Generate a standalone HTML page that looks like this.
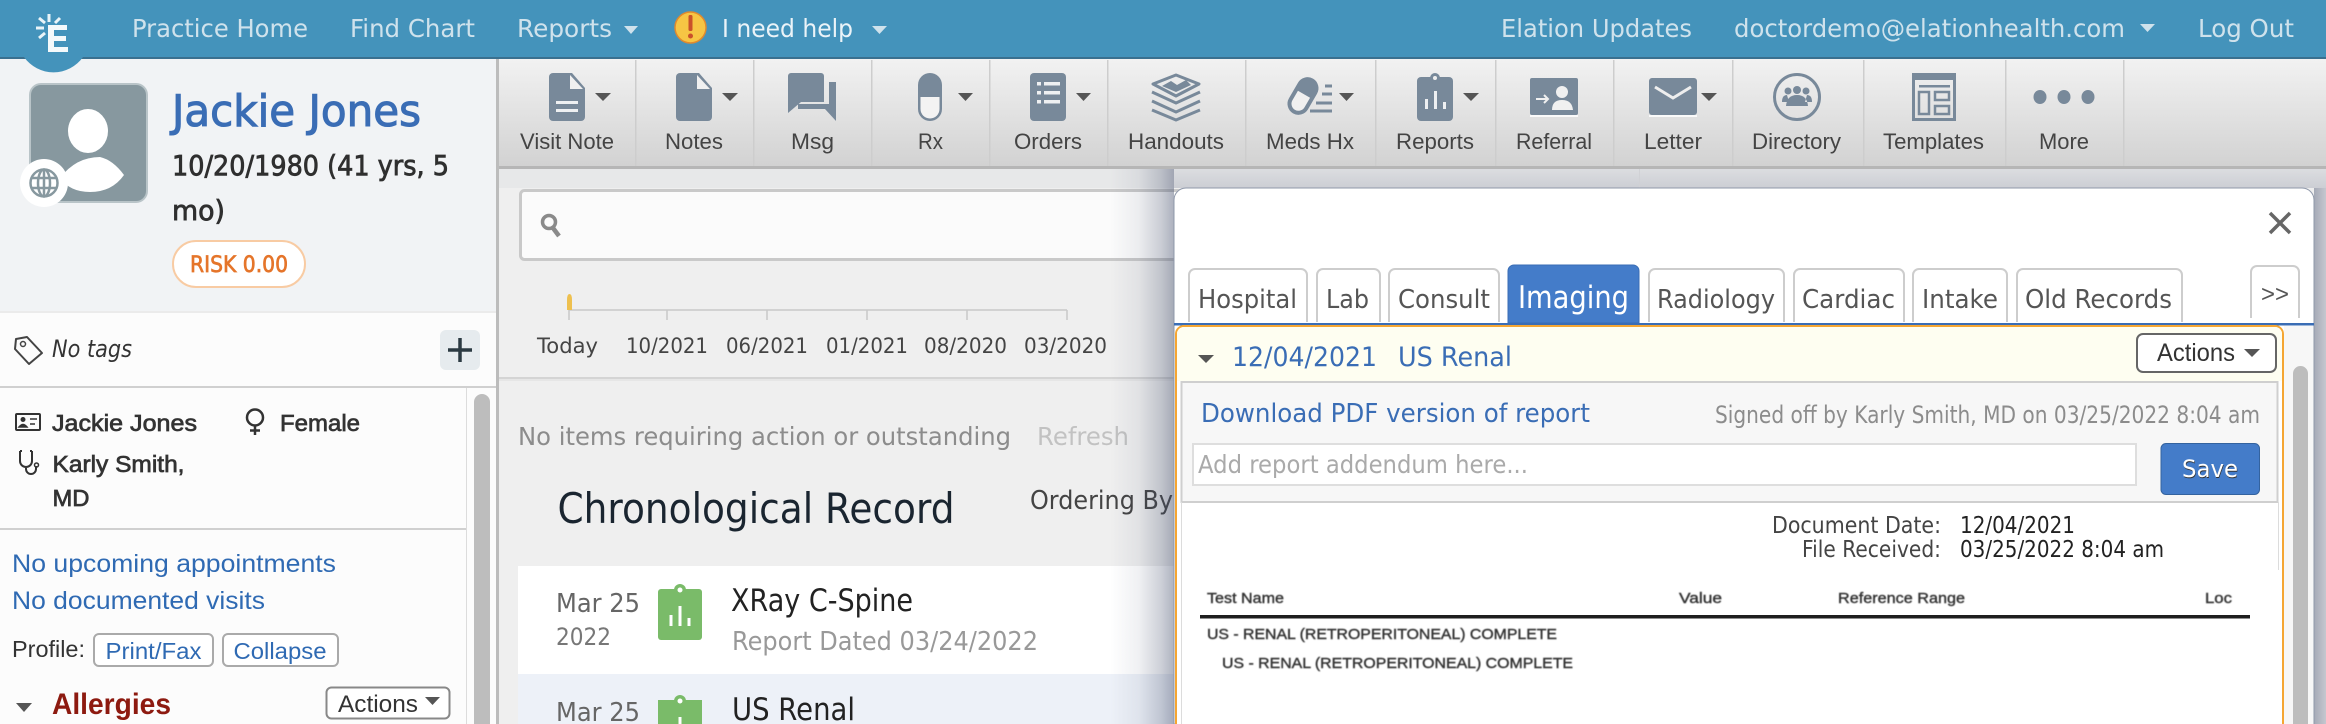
<!DOCTYPE html>
<html><head><meta charset="utf-8"><title>Elation</title>
<style>
html,body{margin:0;padding:0;background:#efefef;width:2326px;height:724px;overflow:hidden}
svg{display:block}
.o{font-family:"DejaVu Sans","Liberation Sans",sans-serif}
.h{font-family:"Liberation Sans",sans-serif}
.n{font-size:25px;fill:#cfe2ec}
.t{font-size:22px;fill:#444}
.tb{font-size:26px;fill:#555}
.ic{fill:#78899a}
.car{fill:#555}
.ln{stroke:#78899a;fill:none}
.pdf{font-size:15px;fill:#333;stroke:#333;stroke-width:.4px;filter:url(#soft)}
</style></head><body>
<svg xmlns="http://www.w3.org/2000/svg" width="2326" height="724" viewBox="0 0 2326 724">
<defs>
<linearGradient id="tg" x1="0" y1="0" x2="0" y2="1"><stop offset="0" stop-color="#f2f2f2"/><stop offset="1" stop-color="#d2d2d2"/></linearGradient>
<linearGradient id="shl" x1="0" y1="0" x2="1" y2="0"><stop offset="0" stop-color="#3f4a68" stop-opacity="0"/><stop offset=".45" stop-color="#3f4a68" stop-opacity=".08"/><stop offset=".8" stop-color="#3f4a68" stop-opacity=".26"/><stop offset="1" stop-color="#3f4a68" stop-opacity=".42"/></linearGradient>
<linearGradient id="shr" x1="0" y1="0" x2="1" y2="0"><stop offset="0" stop-color="#3f4a68" stop-opacity=".42"/><stop offset="1" stop-color="#3f4a68" stop-opacity=".24"/></linearGradient>
<linearGradient id="sht" x1="0" y1="0" x2="0" y2="1"><stop offset="0" stop-color="#3f4a68" stop-opacity=".11"/><stop offset="1" stop-color="#3f4a68" stop-opacity=".2"/></linearGradient>
<filter id="soft" x="-5%" y="-30%" width="110%" height="160%"><feGaussianBlur stdDeviation=".45"/></filter>
</defs>

<!-- main background -->
<rect width="2326" height="724" fill="#efefef"/>

<!-- search + timeline -->
<rect x="520.5" y="190.5" width="1400" height="69" rx="4" fill="#fbfbfb" stroke="#c9c9c9" stroke-width="3"/>
<g fill="none" stroke="#8a8a8a">
<circle cx="549" cy="222" r="6.5" stroke-width="3.5"/><path d="M553 228l6 8" stroke-width="4.5"/>
</g>
<rect x="499" y="377" width="700" height="2" fill="#d4d4d4"/>
<rect x="499" y="379" width="700" height="2" fill="#e6e6e6"/>
<path d="M569 310H1067M569 310v10M667 310v10M767 310v10M867 310v10M967 310v10M1067 310v10" stroke="#c9c9c9" stroke-width="1.5" fill="none"/>
<path d="M567 310V300q0-6 2.500-6t2.500 6V310z" fill="#eec04f"/>
<g class="o" font-size="21" fill="#444">
<text x="537" y="353" textLength="61" lengthAdjust="spacingAndGlyphs">Today</text>
<text x="626" y="353" textLength="82" lengthAdjust="spacingAndGlyphs">10/2021</text>
<text x="726" y="353" textLength="82" lengthAdjust="spacingAndGlyphs">06/2021</text>
<text x="826" y="353" textLength="82" lengthAdjust="spacingAndGlyphs">01/2021</text>
<text x="924" y="353" textLength="83" lengthAdjust="spacingAndGlyphs">08/2020</text>
<text x="1024" y="353" textLength="83" lengthAdjust="spacingAndGlyphs">03/2020</text>
</g>
<text class="o" x="518" y="445" font-size="25" fill="#8c8c8c" textLength="493" lengthAdjust="spacingAndGlyphs">No items requiring action or outstanding</text>
<text class="o" x="1037" y="445" font-size="25" fill="#c2c2c2" textLength="92" lengthAdjust="spacingAndGlyphs">Refresh</text>
<text class="o" x="557.500" y="523" font-size="42" fill="#1a2530" textLength="397" lengthAdjust="spacingAndGlyphs">Chronological Record</text>
<text class="o" x="1030" y="509" font-size="26" fill="#444" textLength="143" lengthAdjust="spacingAndGlyphs">Ordering By</text>

<!-- rows -->
<rect x="518" y="566" width="680" height="108" fill="#fff"/>
<rect x="518" y="674" width="680" height="50" fill="#edf1f8"/>
<text class="o" x="556" y="612" font-size="26" fill="#666" textLength="84" lengthAdjust="spacingAndGlyphs">Mar 25</text>
<text class="o" x="556" y="645" font-size="24" fill="#777" textLength="55" lengthAdjust="spacingAndGlyphs">2022</text>
<text class="o" x="556" y="721" font-size="26" fill="#666" textLength="84" lengthAdjust="spacingAndGlyphs">Mar 25</text>
<g fill="#7abb69">
<rect x="658" y="589" width="44" height="51" rx="3"/><circle cx="680" cy="590" r="6"/>
<rect x="658" y="700" width="44" height="24"/><circle cx="680" cy="701" r="6"/>
</g>
<g fill="#fff">
<circle cx="680" cy="590" r="2.5"/><rect x="669.5" y="615" width="3" height="11"/><rect x="678.5" y="606" width="3" height="20"/><rect x="687.5" y="618" width="3" height="8"/>
<circle cx="680" cy="701" r="2.5"/><rect x="678.5" y="717" width="3" height="7"/>
</g>
<text class="o" x="731" y="611" font-size="31" fill="#222" textLength="182" lengthAdjust="spacingAndGlyphs">XRay C-Spine</text>
<text class="o" x="732" y="650" font-size="26" fill="#999" textLength="306" lengthAdjust="spacingAndGlyphs">Report Dated 03/24/2022</text>
<text class="o" x="732" y="720" font-size="31" fill="#222" textLength="123" lengthAdjust="spacingAndGlyphs">US Renal</text>

<!-- modal shadow -->
<rect x="499" y="169" width="675" height="19" fill="#3f4a68" opacity=".04"/>
<rect x="1110" y="169" width="64" height="555" fill="url(#shl)"/>
<rect x="1174" y="169" width="1152" height="19" fill="url(#sht)"/>
<rect x="2314" y="188" width="12" height="536" fill="url(#shr)"/>
<rect x="1639" y="168" width="1" height="20" fill="#d0d1d5"/>

<!-- sidebar -->
<rect x="0" y="59" width="496" height="253" fill="#f1f3f5"/>
<rect x="0" y="312" width="496" height="412" fill="#fcfcfc"/>
<rect x="0" y="311" width="496" height="2" fill="#ebebeb"/>
<rect x="496" y="59" width="3" height="665" fill="#bcbcbc"/>

<!-- topbar -->
<rect width="2326" height="57" fill="#4493bb"/>
<rect y="57" width="2326" height="2" fill="#3a708f"/>
<path d="M24 57A36 36 0 0 0 83 57z" fill="#4493bb"/>
<g fill="#f4f9fb"><rect x="48" y="25" width="6" height="27"/><rect x="48" y="25" width="19" height="5"/><rect x="48" y="36" width="18" height="5"/><rect x="48" y="47" width="20" height="5"/></g>
<path d="M49 14v8M39 18l6 5M36 28h8M39 38l6-5M60 18l-5 5" stroke="#eaf4f8" stroke-width="3" fill="none"/>
<g class="o n">
<text x="132" y="37" textLength="176" lengthAdjust="spacingAndGlyphs">Practice Home</text>
<text x="350" y="37" textLength="125" lengthAdjust="spacingAndGlyphs">Find Chart</text>
<text x="517" y="37" textLength="95" lengthAdjust="spacingAndGlyphs">Reports</text>
<text x="722" y="37" textLength="131" lengthAdjust="spacingAndGlyphs" style="fill:#eaf3f8">I need help</text>
<text x="1501" y="37" textLength="191" lengthAdjust="spacingAndGlyphs">Elation Updates</text>
<text x="1734" y="37" textLength="391" lengthAdjust="spacingAndGlyphs">doctordemo@elationhealth.com</text>
<text x="2198" y="37" textLength="96" lengthAdjust="spacingAndGlyphs">Log Out</text>
</g>
<g fill="#cfe2ec"><path d="M624 26h14l-7 8zM872 26h15l-7.500 8zM2140 24h15l-7.500 8z"/></g>
<circle cx="690.500" cy="27.500" r="15.500" fill="#f6c544" stroke="#e08a2e" stroke-width="1.500"/>
<rect x="688.500" y="15" width="4" height="16" rx="1.500" fill="#c9502a"/><circle cx="690.500" cy="36" r="2.500" fill="#c9502a"/>

<!-- patient header -->
<rect x="30" y="84" width="117" height="118" rx="11" fill="#87989f" stroke="#b9c4c8" stroke-width="2"/>
<ellipse cx="88" cy="131" rx="20" ry="22" fill="#fff"/>
<path d="M60 178Q76 157 100 157Q113 160 124 175Q112 192 90 192Q70 192 60 178Z" fill="#fff"/>
<ellipse cx="44" cy="183" rx="24" ry="24" fill="#fff"/>
<g fill="none" stroke="#87989f" stroke-width="2.500"><circle cx="44" cy="183" r="13.500"/><ellipse cx="44" cy="183" rx="6" ry="13.500"/><path d="M31 178h26M31 188h26M44 170v26"/></g>
<text class="o" x="172" y="126" font-size="44" fill="#3a6db5" stroke="#3a6db5" stroke-width="1.100" textLength="249" lengthAdjust="spacingAndGlyphs">Jackie Jones</text>
<text class="o" x="172" y="175" font-size="28" fill="#2f2f2f" stroke="#2f2f2f" stroke-width=".8" textLength="277" lengthAdjust="spacingAndGlyphs">10/20/1980 (41 yrs, 5</text>
<text class="o" x="172" y="220" font-size="28" fill="#2f2f2f" stroke="#2f2f2f" stroke-width=".8" textLength="53" lengthAdjust="spacingAndGlyphs">mo)</text>
<rect x="173" y="241" width="132" height="46" rx="23" fill="#fff" stroke="#f8cba3" stroke-width="2"/>
<text class="o" x="190" y="272" font-size="22" fill="#e5752a" stroke="#e5752a" stroke-width=".7" textLength="98" lengthAdjust="spacingAndGlyphs">RISK 0.00</text>

<!-- tags -->
<path d="M16 339l11-2 15 16-13 11-14-15z" fill="none" stroke="#444" stroke-width="2" stroke-linejoin="round"/><circle cx="23" cy="344" r="2.500" fill="none" stroke="#444" stroke-width="1.500"/>
<text class="o" x="52" y="357" font-size="24" font-style="italic" fill="#333" textLength="80" lengthAdjust="spacingAndGlyphs">No tags</text>
<rect x="440" y="330" width="40" height="40" rx="6" fill="#e6ebee"/>
<path d="M448 350h24M460 338v24" stroke="#2b3a42" stroke-width="3.500"/>
<rect x="0" y="386" width="496" height="2" fill="#d0d0d0"/>

<!-- scrollbar -->
<rect x="466" y="388" width="1" height="336" fill="#dcdcdc"/>
<path d="M474 724V402a8 8 0 0 1 16 0V724z" fill="#bdbdbd"/>

<!-- demographics -->
<rect x="16" y="414" width="24" height="16" rx="1" fill="none" stroke="#333" stroke-width="2"/>
<circle cx="23" cy="419.500" r="2.500" fill="#333"/><path d="M19 427q4-5 8 0zM30 419h7M30 424h5" fill="#333" stroke="#333" stroke-width="1.500"/>
<text class="h" x="52" y="431" font-size="23" fill="#333" stroke="#333" stroke-width=".7" textLength="145" lengthAdjust="spacingAndGlyphs">Jackie Jones</text>
<circle cx="255" cy="417.500" r="8" fill="none" stroke="#333" stroke-width="2.500"/><path d="M255 426v9M250 430.500h10" stroke="#333" stroke-width="2.500"/>
<text class="h" x="280" y="431" font-size="23" fill="#333" stroke="#333" stroke-width=".7" textLength="80" lengthAdjust="spacingAndGlyphs">Female</text>
<path d="M20 451v10a6 6 0 0 0 12 0v-10M20 451h2M30 451h2M26 467v2a5 5 0 0 0 10 0v-3" fill="none" stroke="#333" stroke-width="2"/><circle cx="36.500" cy="465" r="2" fill="none" stroke="#333" stroke-width="1.500"/>
<text class="h" x="52.500" y="472" font-size="23" fill="#333" stroke="#333" stroke-width=".7" textLength="132" lengthAdjust="spacingAndGlyphs">Karly Smith,</text>
<text class="h" x="52.500" y="506" font-size="23" fill="#333" stroke="#333" stroke-width=".7" textLength="37" lengthAdjust="spacingAndGlyphs">MD</text>
<rect x="0" y="528" width="466" height="2" fill="#d0d0d0"/>
<text class="h" x="12" y="572" font-size="25" fill="#2f6ab3" textLength="324" lengthAdjust="spacingAndGlyphs">No upcoming appointments</text>
<text class="h" x="12" y="609" font-size="25" fill="#2f6ab3" textLength="253" lengthAdjust="spacingAndGlyphs">No documented visits</text>
<text class="h" x="12" y="657" font-size="23" fill="#333" textLength="73" lengthAdjust="spacingAndGlyphs">Profile:</text>
<rect x="94" y="634" width="119" height="32" rx="5" fill="#fff" stroke="#aaa" stroke-width="2"/>
<text class="h" x="105.500" y="659" font-size="23" fill="#2f6ab3" textLength="96" lengthAdjust="spacingAndGlyphs">Print/Fax</text>
<rect x="223" y="634" width="115" height="32" rx="5" fill="#fff" stroke="#aaa" stroke-width="2"/>
<text class="h" x="233.500" y="659" font-size="23" fill="#2f6ab3" textLength="93" lengthAdjust="spacingAndGlyphs">Collapse</text>
<path d="M16 703h16l-8 9z" fill="#555"/>
<text class="h" x="52" y="714" font-size="30" font-weight="700" fill="#8d1a10" textLength="119" lengthAdjust="spacingAndGlyphs">Allergies</text>
<rect x="326.500" y="687.500" width="123" height="31" rx="5" fill="#fff" stroke="#888" stroke-width="2"/>
<text class="h" x="338" y="712" font-size="24" fill="#333" textLength="80" lengthAdjust="spacingAndGlyphs">Actions</text>
<path d="M425 697h15l-7.500 8z" fill="#555"/>

<!-- toolbar -->
<rect x="499" y="59" width="1827" height="107" fill="url(#tg)"/>
<rect x="499" y="166" width="1827" height="3" fill="#b6b6b6"/>
<g fill="#cdcdcd">
<rect x="635" y="60" width="1.500" height="106"/><rect x="753" y="60" width="1.500" height="106"/><rect x="871" y="60" width="1.500" height="106"/><rect x="989" y="60" width="1.500" height="106"/><rect x="1107" y="60" width="1.500" height="106"/><rect x="1245" y="60" width="1.500" height="106"/><rect x="1375" y="60" width="1.500" height="106"/><rect x="1495" y="60" width="1.500" height="106"/><rect x="1613" y="60" width="1.500" height="106"/><rect x="1732" y="60" width="1.500" height="106"/><rect x="1863" y="60" width="1.500" height="106"/><rect x="2005" y="60" width="1.500" height="106"/><rect x="2123" y="60" width="1.500" height="106"/>
</g>
<g class="h t">
<text x="520" y="149" textLength="94" lengthAdjust="spacingAndGlyphs">Visit Note</text>
<text x="665" y="149" textLength="58" lengthAdjust="spacingAndGlyphs">Notes</text>
<text x="791" y="149" textLength="43" lengthAdjust="spacingAndGlyphs">Msg</text>
<text x="918" y="149" textLength="25" lengthAdjust="spacingAndGlyphs">Rx</text>
<text x="1014" y="149" textLength="68" lengthAdjust="spacingAndGlyphs">Orders</text>
<text x="1128" y="149" textLength="96" lengthAdjust="spacingAndGlyphs">Handouts</text>
<text x="1266" y="149" textLength="88" lengthAdjust="spacingAndGlyphs">Meds Hx</text>
<text x="1396" y="149" textLength="78" lengthAdjust="spacingAndGlyphs">Reports</text>
<text x="1516" y="149" textLength="76" lengthAdjust="spacingAndGlyphs">Referral</text>
<text x="1644" y="149" textLength="58" lengthAdjust="spacingAndGlyphs">Letter</text>
<text x="1752" y="149" textLength="89" lengthAdjust="spacingAndGlyphs">Directory</text>
<text x="1883" y="149" textLength="101" lengthAdjust="spacingAndGlyphs">Templates</text>
<text x="2039" y="149" textLength="50" lengthAdjust="spacingAndGlyphs">More</text>
</g>
<g class="car"><path d="M595 93h16l-8 8zM722 93h16l-8 8zM958 93h15l-7.500 8zM1076 93h15l-7.500 8zM1339 93h15l-7.500 8zM1463 93h16l-8 8zM1701 93h16l-8 8z"/></g>
<!-- visit note -->
<path class="ic" d="M553 73H572L585 88V117a4 4 0 0 1-4 4H553a4 4 0 0 1-4-4V77a4 4 0 0 1 4-4z"/>
<path d="M570 75V89H583z" fill="#f0f0f0"/>
<rect x="556" y="101" width="22" height="3" fill="#eef0f2"/><rect x="556" y="109" width="22" height="3" fill="#eef0f2"/>
<!-- notes -->
<path class="ic" d="M680 73H699L712 88V117a4 4 0 0 1-4 4H680a4 4 0 0 1-4-4V77a4 4 0 0 1 4-4z"/>
<path d="M697 75V89H710z" fill="#f0f0f0"/>
<!-- msg -->
<path class="ic" d="M791 73H821a3 3 0 0 1 3 3V102H801L788 113V76a3 3 0 0 1 3-3z"/>
<path class="ic" d="M829 82H836V121L825 109H798V104H829z"/>
<!-- rx -->
<rect x="918" y="73" width="24" height="48" rx="12" class="ic"/>
<path d="M920.500 97H939.500V109a9.500 9.500 0 0 1-19 0z" fill="#f3f3f3"/>
<!-- orders -->
<rect x="1030" y="73" width="36" height="48" rx="4" class="ic"/>
<path d="M1037 82h4v3.500h-4zM1044 82h16v3.500h-16zM1037 91h4v3.500h-4zM1044 91h16v3.500h-16zM1037 100h4v3.500h-4zM1044 100h16v3.500h-16z" fill="#eef0f2"/>
<!-- handouts -->
<g class="ln" stroke-width="3" stroke-linejoin="round">
<path d="M1153 84L1176 75L1199 84L1176 96Z"/>
<path d="M1152 92L1176 103L1200 92M1152 101L1176 112L1200 101M1152 110L1176 120L1200 110"/>
</g>
<path class="ic" d="M1162 86L1171 81L1177 85L1186 80L1191 85L1176 92Z"/>
<!-- meds -->
<g transform="rotate(30 1303 96)">
<rect x="1294" y="78" width="18" height="36" rx="9" fill="#f0f0f0" stroke="#78899a" stroke-width="4"/>
<path class="ic" d="M1294 94V87a9 9 0 0 1 18 0V94z"/>
</g>
<path class="ln" stroke-width="3" d="M1325 86h7M1322 94h10M1316 103h16M1310 111h22"/>
<!-- reports clipboard -->
<rect x="1417" y="77" width="36" height="44" rx="4" class="ic"/><circle cx="1435" cy="78" r="5" class="ic"/><circle cx="1435" cy="78" r="2" fill="#eee"/>
<path d="M1425 99h3v10h-3zM1434 91h3v18h-3zM1443 102h3v7h-3z" fill="#eef0f2"/>
<!-- referral -->
<rect x="1530" y="78" width="48" height="37" rx="2" class="ic"/><rect x="1530" y="115" width="48" height="2" fill="#fafafa"/>
<circle cx="1562" cy="92" r="6" fill="#f0f0f0"/><path d="M1552 110q0-10 10-10t11 10z" fill="#f0f0f0"/>
<path d="M1536 99h12M1544 95l4 4-4 4" fill="none" stroke="#f0f0f0" stroke-width="2"/>
<!-- letter -->
<rect x="1649" y="78" width="48" height="37" rx="3" class="ic"/><rect x="1649" y="115" width="48" height="2" fill="#fafafa"/>
<path d="M1655 87L1673 98L1691 87" fill="none" stroke="#eee" stroke-width="3"/>
<!-- directory -->
<circle cx="1797" cy="97" r="22.500" fill="none" stroke="#78899a" stroke-width="3"/>
<circle cx="1797" cy="90" r="4" class="ic"/><circle cx="1788" cy="91" r="3.500" class="ic"/><circle cx="1806" cy="91" r="3.500" class="ic"/>
<path class="ic" d="M1786 106q1-11 11-11t11 11zM1782 102q0-7 5-7l2 7zM1812 102q0-7-5-7l-2 7z"/>
<!-- templates -->
<g class="ln" stroke-width="3"><rect x="1913.500" y="74.500" width="41" height="45"/><rect x="1919" y="92" width="10" height="22" stroke-width="2.500"/><rect x="1935" y="92" width="14" height="8" stroke-width="2.500"/><rect x="1935" y="106" width="14" height="8" stroke-width="2.500"/></g>
<rect x="1913" y="74" width="42" height="6" class="ic"/><rect x="1919" y="85" width="31" height="2.500" class="ic"/>
<!-- more -->
<ellipse cx="2040" cy="97" rx="6.500" ry="7" class="ic"/><ellipse cx="2064" cy="97" rx="6.500" ry="7" class="ic"/><ellipse cx="2088" cy="97" rx="6.500" ry="7" class="ic"/>

<!-- modal -->
<path d="M1174 724V200a12 12 0 0 1 12-12H2302a12 12 0 0 1 12 12V724z" fill="#fff" stroke="#8f98aa" stroke-width="1"/>
<path d="M2270 213L2290 233M2290 213L2270 233" stroke="#666" stroke-width="3.500"/>

<!-- tabs -->
<g fill="#fff" stroke="#cdcdcd" stroke-width="2">
<path d="M1189 322V275a6 6 0 0 1 6-6H1301a6 6 0 0 1 6 6V322"/>
<path d="M1317 322V275a6 6 0 0 1 6-6H1374a6 6 0 0 1 6 6V322"/>
<path d="M1389 322V275a6 6 0 0 1 6-6H1493a6 6 0 0 1 6 6V322"/>
<path d="M1649 322V275a6 6 0 0 1 6-6H1778a6 6 0 0 1 6 6V322"/>
<path d="M1794 322V275a6 6 0 0 1 6-6H1898a6 6 0 0 1 6 6V322"/>
<path d="M1913 322V275a6 6 0 0 1 6-6H2001a6 6 0 0 1 6 6V322"/>
<path d="M2017 322V275a6 6 0 0 1 6-6H2176a6 6 0 0 1 6 6V322"/>
<path d="M2251 318V272a6 6 0 0 1 6-6H2293a6 6 0 0 1 6 6V318"/>
</g>
<path d="M1508 323V271a6 6 0 0 1 6-6H1633a6 6 0 0 1 6 6V323z" fill="#447cc9" stroke="#3a6db5" stroke-width="1"/>
<g class="o tb">
<text x="1198" y="308" textLength="99" lengthAdjust="spacingAndGlyphs">Hospital</text>
<text x="1326" y="308" textLength="43" lengthAdjust="spacingAndGlyphs">Lab</text>
<text x="1398" y="308" textLength="92" lengthAdjust="spacingAndGlyphs">Consult</text>
<text x="1518" y="308" textLength="111" lengthAdjust="spacingAndGlyphs" style="fill:#fff;font-size:31px">Imaging</text>
<text x="1657" y="308" textLength="118" lengthAdjust="spacingAndGlyphs">Radiology</text>
<text x="1802" y="308" textLength="93" lengthAdjust="spacingAndGlyphs">Cardiac</text>
<text x="1922" y="308" textLength="76" lengthAdjust="spacingAndGlyphs">Intake</text>
<text x="2025" y="308" textLength="147" lengthAdjust="spacingAndGlyphs">Old Records</text>
</g>
<text class="h" x="2261" y="302" font-size="24" fill="#555" textLength="28" lengthAdjust="spacingAndGlyphs">&gt;&gt;</text>
<rect x="1174" y="323" width="1140" height="2.500" fill="#3a6db5"/>

<!-- right scroll -->
<rect x="2284" y="326" width="29.500" height="398" fill="#f7f7f7"/>
<path d="M2293 724V373.500a7.500 7.500 0 0 1 15 0V724z" fill="#bdbdbd"/>

<!-- report box -->
<path d="M1176 724V334a8 8 0 0 1 8-8H2275a8 8 0 0 1 8 8V724" fill="#fff" stroke="#f5a633" stroke-width="2"/>
<path d="M1177 381V334a7 7 0 0 1 7-7H2275a7 7 0 0 1 7 7V381z" fill="#fefef1"/>
<path d="M1198 355h16l-8 8z" fill="#555"/>
<text class="o" x="1232" y="366" font-size="27" fill="#3a6db5" textLength="145" lengthAdjust="spacingAndGlyphs">12/04/2021</text>
<text class="o" x="1398" y="366" font-size="27" fill="#3a6db5" textLength="114" lengthAdjust="spacingAndGlyphs">US Renal</text>
<rect x="2137" y="334" width="139" height="38" rx="6" fill="#fff" stroke="#666" stroke-width="2"/>
<text class="h" x="2157" y="361" font-size="25" fill="#333" textLength="78" lengthAdjust="spacingAndGlyphs">Actions</text>
<path d="M2244 349h16l-8 8z" fill="#555"/>

<rect x="1181.500" y="382" width="1096" height="120" fill="#f7f7f7" stroke="#cfcfcf" stroke-width="2"/>
<text class="o" x="1201" y="422" font-size="26" fill="#3a6db5" textLength="389" lengthAdjust="spacingAndGlyphs">Download PDF version of report</text>
<text class="o" x="1715" y="423" font-size="24" fill="#8c8c8c" textLength="545" lengthAdjust="spacingAndGlyphs">Signed off by Karly Smith, MD on 03/25/2022 8:04 am</text>
<rect x="1193" y="444" width="943" height="41" fill="#fff" stroke="#dedede" stroke-width="2"/>
<text class="o" x="1198" y="473" font-size="25" fill="#aaa" textLength="330" lengthAdjust="spacingAndGlyphs">Add report addendum here...</text>
<rect x="2161" y="443.500" width="98.500" height="51" rx="5" fill="#447cc9" stroke="#34639f" stroke-width="1"/>
<text class="o" x="2182.500" y="478" font-size="24" fill="#333" textLength="56" lengthAdjust="spacingAndGlyphs">Save</text>
<text class="o" x="2182" y="477" font-size="24" fill="#fff" textLength="56" lengthAdjust="spacingAndGlyphs">Save</text>
<rect x="1181" y="502" width="1" height="222" fill="#dcdcdc"/>
<rect x="2278" y="502" width="1" height="68" fill="#dcdcdc"/>

<text class="o" x="1772" y="533" font-size="23" fill="#444" textLength="169" lengthAdjust="spacingAndGlyphs">Document Date:</text>
<text class="o" x="1960" y="533" font-size="23" fill="#222" textLength="115" lengthAdjust="spacingAndGlyphs">12/04/2021</text>
<text class="o" x="1802" y="557" font-size="23" fill="#444" textLength="139" lengthAdjust="spacingAndGlyphs">File Received:</text>
<text class="o" x="1960" y="557" font-size="23" fill="#222" textLength="204" lengthAdjust="spacingAndGlyphs">03/25/2022 8:04 am</text>

<g class="h pdf">
<text x="1207" y="603" textLength="77" lengthAdjust="spacingAndGlyphs">Test Name</text>
<text x="1679" y="603" textLength="43" lengthAdjust="spacingAndGlyphs">Value</text>
<text x="1838" y="603" textLength="127" lengthAdjust="spacingAndGlyphs">Reference Range</text>
<text x="2205" y="603" textLength="27" lengthAdjust="spacingAndGlyphs">Loc</text>
<text x="1207" y="639" textLength="350" lengthAdjust="spacingAndGlyphs">US - RENAL (RETROPERITONEAL) COMPLETE</text>
<text x="1222" y="668" textLength="351" lengthAdjust="spacingAndGlyphs">US - RENAL (RETROPERITONEAL) COMPLETE</text>
</g>
<rect x="1200" y="615" width="1050" height="3.500" fill="#1e1e1e"/>
</svg>
</body></html>
